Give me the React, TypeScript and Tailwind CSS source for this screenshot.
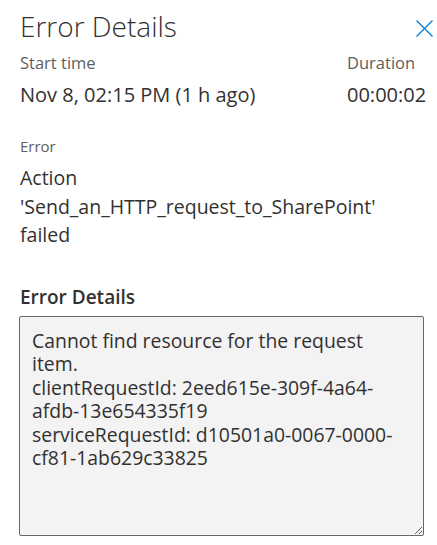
import React from "react";

const errorText =
	"Cannot find resource for the request\nitem.\nclientRequestId: 2eed615e-309f-4a64-\nafdb-13e654335f19\nserviceRequestId: d10501a0-0067-0000-\ncf81-1ab629c33825";

export default function App() {
	return (
		<div className="w-[437px] h-[545px] bg-white pl-5 pr-[4px] pt-[6px] font-['Open_Sans',sans-serif] text-[#323130] overflow-hidden">
			{/* Header */}
			<div className="flex items-start justify-between">
				<h1 className="text-[28px] font-light leading-[40px] text-[#323130]">
					Error Details
				</h1>
				<button className="mt-[14px] w-[17px] h-[17px] text-[#0078d4]">
					<svg width="17" height="17" viewBox="0 0 17 17" fill="none">
						<path d="M0.5 0.5L16.5 16.5M16.5 0.5L0.5 16.5" stroke="currentColor" strokeWidth="1.2" />
					</svg>
				</button>
			</div>

			{/* Start time / duration */}
			<div className="mt-[5px] grid grid-cols-[1fr_86px]">
				<div>
					<div className="text-[16.5px] leading-[24px] text-[#605e5c]">Start time</div>
					<div className="mt-[6px] text-[20px] leading-[28px]">Nov 8, 02:15 PM (1 h ago)</div>
				</div>
				<div>
					<div className="text-[16.5px] leading-[24px] text-[#605e5c]">Duration</div>
					<div className="mt-[6px] text-[20px] leading-[28px]">00:00:02</div>
				</div>
			</div>

			{/* Error */}
			<div className="mt-[27px] text-[15px] leading-[20px] text-[#605e5c]">Error</div>
			<div className="mt-[8px] text-[19.5px] leading-[28.5px] w-[380px]">
				Action 'Send_an_HTTP_request_to_SharePoint' failed
			</div>

			{/* Error details */}
			<div className="mt-[35px] text-[19px] font-semibold leading-[24px]">Error Details</div>
			<textarea
				readOnly
				value={errorText}
				className="-ml-px mt-[7.5px] block w-[405px] h-[220px] rounded-[2px] border border-[#666666] bg-[#f3f3f3] pl-[12px] pr-[8px] pt-[12px] text-[19.4px] leading-[23.4px] text-[#323130] outline-none font-['Open_Sans',sans-serif]"
			/>
		</div>
	);
}
